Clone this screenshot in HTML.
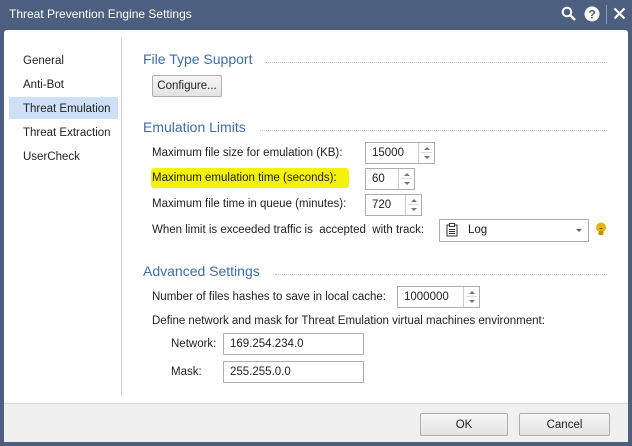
<!DOCTYPE html>
<html><head><meta charset="utf-8"><style>
*{margin:0;padding:0;box-sizing:border-box}
body{width:632px;height:446px;background:#4c5f7e;font-family:"Liberation Sans",sans-serif;font-size:11.5px;color:#222;position:relative;overflow:hidden}
.a{position:absolute;white-space:nowrap}
.title{left:9px;top:7px;color:#fff;font-size:12px}
.main{left:4px;top:30px;width:624px;height:373px;background:#fff;border-radius:3px 3px 0 0}
.foot{left:4px;top:403px;width:624px;height:39px;background:#f0f0f0;border-top:1px solid #d8d8d8}
.sep{left:121px;top:38px;width:1px;height:358px;background:#cfcfcf}
.nav{left:23px}
.sel{left:9px;top:97px;width:109px;height:22px;background:#cde0f7}
.h{color:#3d6ea8;font-size:14px}
.dots{border-top:1px dotted #bbb;height:0}
.box{border:1px solid #adadad;background:#fff;height:22px;padding:4px 6px}
.spin{border:1px solid #adadad;background:#fff;height:22px}
.spin .v{position:absolute;left:6px;top:4px}
.spin .b{position:absolute;right:0;top:0;width:16px;height:20px;border-left:1px solid #ccc}
.spin .b:before{content:"";position:absolute;left:5px;top:4px;border:3px solid transparent;border-bottom:3px solid #777;border-top:0}
.spin .b:after{content:"";position:absolute;left:5px;top:13px;border:3px solid transparent;border-top:3px solid #777;border-bottom:0}
.spin .b i{position:absolute;left:2px;right:2px;top:9px;border-top:1px solid #ddd}
.btn{border:1px solid #adadad;background:linear-gradient(#f6f6f6,#e3e3e3);text-align:center;border-radius:2px}
</style></head><body>
<div class="a title">Threat Prevention Engine Settings</div>
<svg class="a" style="left:561px;top:6px" width="16" height="16" viewBox="0 0 16 16"><circle cx="6" cy="6" r="4.3" fill="none" stroke="#fff" stroke-width="2"/><path d="M9 9l5 5" stroke="#fff" stroke-width="2.6"/></svg>
<svg class="a" style="left:584px;top:6px" width="16" height="16" viewBox="0 0 16 16"><circle cx="8" cy="8" r="7.5" fill="#fff"/><text x="8" y="12.5" text-anchor="middle" font-family="Liberation Sans" font-weight="bold" font-size="12" fill="#4c5f7e">?</text></svg>
<div class="a" style="left:606px;top:5px;width:1px;height:19px;background:#8a9ab3"></div>
<svg class="a" style="left:613px;top:7px" width="13" height="13" viewBox="0 0 13 13"><path d="M1.5 1.5l10 10M11.5 1.5l-10 10" stroke="#fff" stroke-width="2.2"/></svg>
<div class="a main"></div>
<div class="a foot"></div>
<div class="a sep"></div>
<div class="a sel"></div>
<div class="a nav" style="top:55px">General</div>
<div class="a nav" style="top:79px">Anti-Bot</div>
<div class="a nav" style="top:103px">Threat Emulation</div>
<div class="a nav" style="top:127px">Threat Extraction</div>
<div class="a nav" style="top:151px">UserCheck</div>

<div class="a h" style="left:143px;top:51px">File Type Support</div>
<div class="a dots" style="left:265px;top:62px;width:342px"></div>
<div class="a btn" style="left:152px;top:75px;width:70px;height:22px;padding-top:4px">Configure...</div>

<div class="a h" style="left:143px;top:119px">Emulation Limits</div>
<div class="a dots" style="left:260px;top:130px;width:347px"></div>
<div class="a" style="left:152px;top:147px">Maximum file size for emulation (KB):</div>
<div class="a spin" style="left:365px;top:142px;width:70px"><span class="v">15000</span><div class="b"><i></i></div></div>
<div class="a" style="left:151px;top:168px;width:198px;height:20px;background:#f4f20a;border-radius:3px"></div>
<div class="a" style="left:152px;top:172px">Maximum emulation time (seconds):</div>
<div class="a spin" style="left:365px;top:168px;width:50px"><span class="v">60</span><div class="b"><i></i></div></div>
<div class="a" style="left:152px;top:198px">Maximum file time in queue (minutes):</div>
<div class="a spin" style="left:365px;top:194px;width:57px"><span class="v">720</span><div class="b"><i></i></div></div>
<div class="a" style="left:152px;top:224px">When limit is exceeded traffic is&nbsp; accepted&nbsp; with track:</div>
<div class="a" style="left:439px;top:219px;width:150px;height:23px;border:1px solid #adadad;background:#fff"></div>
<svg class="a" style="left:446px;top:223px" width="12" height="14" viewBox="0 0 12 14"><rect x="1" y="2" width="10" height="11" fill="none" stroke="#333"/><rect x="3.5" y="0.5" width="5" height="3" fill="#fff" stroke="#333"/><path d="M3 6.5h6M3 8.5h6M3 10.5h6" stroke="#333"/></svg>
<div class="a" style="left:468px;top:224px">Log</div>
<div class="a" style="left:576px;top:229px;border:3px solid transparent;border-top:3px solid #666;border-bottom:0"></div>
<svg class="a" style="left:595px;top:222px" width="12" height="14" viewBox="0 0 12 14"><circle cx="6" cy="5.5" r="5" fill="#e8b400"/><rect x="3.5" y="9" width="5" height="4" rx="1" fill="#c59200"/><path d="M4.5 6.5h3" stroke="#6b4e00"/></svg>

<div class="a h" style="left:143px;top:263px">Advanced Settings</div>
<div class="a dots" style="left:275px;top:274px;width:332px"></div>
<div class="a" style="left:152px;top:291px">Number of files hashes to save in local cache:</div>
<div class="a spin" style="left:397px;top:286px;width:83px"><span class="v">1000000</span><div class="b"><i></i></div></div>
<div class="a" style="left:152px;top:315px">Define network and mask for Threat Emulation virtual machines environment:</div>
<div class="a" style="left:171px;top:338px">Network:</div>
<div class="a box" style="left:223px;top:333px;width:141px">169.254.234.0</div>
<div class="a" style="left:171px;top:366px">Mask:</div>
<div class="a box" style="left:223px;top:361px;width:141px">255.255.0.0</div>

<div class="a btn" style="left:420px;top:413px;width:88px;height:23px;padding-top:5px">OK</div>
<div class="a btn" style="left:519px;top:413px;width:91px;height:23px;padding-top:5px">Cancel</div>
</body></html>
